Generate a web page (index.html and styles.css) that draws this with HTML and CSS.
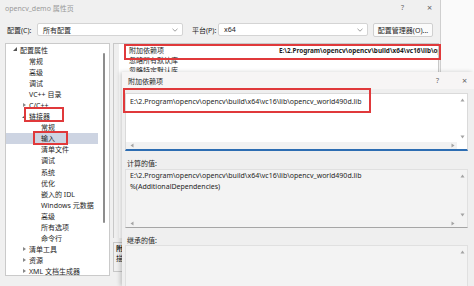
FILE: index.html
```html
<!DOCTYPE html>
<html lang="zh-CN">
<head>
  <meta charset="UTF-8" />
  <title>opencv_demo 属性页</title>
  <link rel="stylesheet" href="styles.css">
</head>
<body>

  <div class="window">
    <div class="titlebar">
      <span class="title">opencv_demo 属性页</span>
      <span class="help">?</span>
      <span class="close">×</span>
    </div>

    <div class="config-row">
      <span class="lbl lbl-config">配置(C):</span>
      <div class="combo combo-config">
        <span>所有配置</span>
        <svg width="6" height="4" viewBox="0 0 6 4"><path d="M0.5 0.8 L3 3.2 L5.5 0.8" fill="none" stroke="#888" stroke-width="0.8"/></svg>
      </div>
      <span class="lbl lbl-platform">平台(P):</span>
      <div class="combo combo-platform">
        <span>x64</span>
        <svg width="6" height="4" viewBox="0 0 6 4"><path d="M0.5 0.8 L3 3.2 L5.5 0.8" fill="none" stroke="#888" stroke-width="0.8"/></svg>
      </div>
      <button class="btn">配置管理器(O)...</button>
    </div>

    <div class="main">
      <div class="tree">
        <div class="thumb"></div>
        <div class="node lv0"><i class="tw open"></i>配置属性</div>
        <div class="node lv1"><i class="tw"></i>常规</div>
        <div class="node lv1"><i class="tw"></i>高级</div>
        <div class="node lv1"><i class="tw"></i>调试</div>
        <div class="node lv1"><i class="tw"></i>VC++ 目录</div>
        <div class="node lv1"><i class="tw shut"></i>C/C++</div>
        <div class="node lv1"><i class="tw open"></i>链接器</div>
        <div class="node lv2">常规</div>
        <div class="node lv2 sel">输入</div>
        <div class="node lv2">清单文件</div>
        <div class="node lv2">调试</div>
        <div class="node lv2">系统</div>
        <div class="node lv2">优化</div>
        <div class="node lv2">嵌入的 IDL</div>
        <div class="node lv2">Windows 元数据</div>
        <div class="node lv2">高级</div>
        <div class="node lv2">所有选项</div>
        <div class="node lv2">命令行</div>
        <div class="node lv1"><i class="tw shut"></i>清单工具</div>
        <div class="node lv1"><i class="tw shut"></i>资源</div>
        <div class="node lv1"><i class="tw shut"></i>XML 文档生成器</div>
      </div>

      <div class="props">
        <div class="grid">
          <div class="row">
            <span class="name">附加依赖项</span>
            <span class="value">E:\2.Program\opencv\opencv\build\x64\vc16\lib\opencv_world490d.lib;%(AdditionalDependencies)</span>
          </div>
          <div class="row"><span class="name">忽略所有默认库</span></div>
          <div class="row"><span class="name">忽略特定默认库</span></div>
        </div>
        <div class="desc">
          <b>附</b>
          <span>描</span>
        </div>
      </div>
    </div>
  </div>

  <div class="dep-dialog">
    <div class="dlg-title">
      <span class="title">附加依赖项</span>
      <span class="help">?</span>
      <span class="close">×</span>
    </div>

    <div class="box edit">
      <div class="box-text">E:\2.Program\opencv\opencv\build\x64\vc16\lib\opencv_world490d.lib</div>
      <div class="vscroll">
        <svg width="5" height="4" viewBox="0 0 5 4"><path d="M2.5 0.5 L4.5 3.5 L0.5 3.5 Z" fill="#a3a3a3"/></svg>
        <svg width="5" height="4" viewBox="0 0 5 4"><path d="M0.5 0.5 L4.5 0.5 L2.5 3.5 Z" fill="#a3a3a3"/></svg>
      </div>
      <div class="hscroll">
        <svg width="4" height="5" viewBox="0 0 4 5"><path d="M3.5 0.5 L3.5 4.5 L0.5 2.5 Z" fill="#a3a3a3"/></svg>
        <svg width="4" height="5" viewBox="0 0 4 5"><path d="M0.5 0.5 L3.5 2.5 L0.5 4.5 Z" fill="#a3a3a3"/></svg>
      </div>
    </div>

    <div class="field-label">计算的值:</div>
    <div class="box computed">
      <div class="box-text">E:\2.Program\opencv\opencv\build\x64\vc16\lib\opencv_world490d.lib<br>%(AdditionalDependencies)</div>
      <div class="vscroll">
        <svg width="5" height="4" viewBox="0 0 5 4"><path d="M2.5 0.5 L4.5 3.5 L0.5 3.5 Z" fill="#a3a3a3"/></svg>
        <svg width="5" height="4" viewBox="0 0 5 4"><path d="M0.5 0.5 L4.5 0.5 L2.5 3.5 Z" fill="#a3a3a3"/></svg>
      </div>
      <div class="hscroll">
        <svg width="4" height="5" viewBox="0 0 4 5"><path d="M3.5 0.5 L3.5 4.5 L0.5 2.5 Z" fill="#a3a3a3"/></svg>
        <svg width="4" height="5" viewBox="0 0 4 5"><path d="M0.5 0.5 L3.5 2.5 L0.5 4.5 Z" fill="#a3a3a3"/></svg>
      </div>
    </div>

    <div class="field-label">继承的值:</div>
    <div class="box inherited">
      <div class="box-text"></div>
      <div class="vscroll">
        <svg width="5" height="4" viewBox="0 0 5 4"><path d="M2.5 0.5 L4.5 3.5 L0.5 3.5 Z" fill="#a3a3a3"/></svg>
      </div>
    </div>
  </div>

  <!-- red highlight boxes drawn over the screenshot -->
  <div class="mark mark-row"></div>
  <div class="mark mark-linker"></div>
  <div class="mark mark-input"></div>
  <div class="mark mark-path"></div>

</body>
</html>
```

FILE: styles.css
```css
body {
  margin: 0;
  width: 474px;
  height: 286px;
  overflow: hidden;
  position: relative;
  background: #fafafa;
  font-family: "Noto Sans", "Noto Sans CJK SC", sans-serif;
  font-size: 7px;
  color: #1e1e1e;
}
.window {
  width: 441px;
  height: 286px;
  box-sizing: border-box;
  padding: 0 1px 0 5px;
  background: #f0f0f0;
  border-right: 1px solid #cfcfcf;
  display: flex;
  flex-direction: column;
}
.titlebar {
  height: 15px;
  display: flex;
  align-items: center;
  color: #9a9a9a;
}
.titlebar .title {
  flex: 1;
}
.help {
  width: 26px;
  color: #666;
}
.close {
  width: 12px;
  color: #666;
  font-size: 9px;
}
.config-row {
  height: 15px;
  margin-top: 7px;
  display: flex;
  align-items: center;
}
.lbl-config {
  width: 30px;
  padding-left: 2px;
}
.lbl-platform {
  width: 26px;
  margin-left: 9px;
}
.combo {
  height: 13px;
  box-sizing: border-box;
  background: #fff;
  border: 1px solid #d4d4d4;
  border-radius: 2px;
  display: flex;
  align-items: center;
  justify-content: space-between;
  padding: 0 4px 0 5px;
}
.combo-config {
  width: 146px;
}
.combo-platform {
  width: 150px;
}
.btn {
  margin-left: 5px;
  width: 60px;
  height: 14px;
  padding: 0;
  font: inherit;
  color: #1e1e1e;
  background: #fbfbfb;
  border: 1px solid #d0d0d0;
  border-radius: 2px;
}
.main {
  margin-top: 6px;
  height: 233px;
  display: flex;
  gap: 3px;
}
.tree {
  position: relative;
  width: 105px;
  flex: none;
  box-sizing: border-box;
  background: #fff;
  border: 1px solid #cacaca;
}
.thumb {
  position: absolute;
  left: 97px;
  top: 9px;
  width: 2px;
  height: 170px;
  border-radius: 1px;
  background: #8d8d8d;
}
.node {
  height: 11.1px;
  display: flex;
  align-items: center;
  margin-right: 11px;
  white-space: nowrap;
}
.node.lv0 { padding-left: 7px; }
.node.lv1 { padding-left: 16px; }
.node.lv2 { padding-left: 35px; }
.node.sel {
  background: #cdd4e2;
}
.tw {
  width: 7px;
  height: 7px;
  flex: none;
  position: relative;
}
.tw.open::before {
  content: "";
  position: absolute;
  left: 0;
  top: 1px;
  border-right: 4px solid #555;
  border-top: 4px solid transparent;
}
.tw.shut::before {
  content: "";
  position: absolute;
  left: 1px;
  top: 1px;
  border-left: 3px solid #888;
  border-top: 2.5px solid transparent;
  border-bottom: 2.5px solid transparent;
}
.props {
  flex: 1;
  min-width: 0;
  display: flex;
  flex-direction: column;
  gap: 4px;
  padding-bottom: 4px;
}
.grid {
  flex: 1;
  box-sizing: border-box;
  padding-top: 1px;
  background: linear-gradient(to right, #efefef 5px, #fff 5px);
  border: 1px solid #c8c8c8;
  border-bottom: 0;
  overflow: hidden;
}
.row {
  height: 10px;
  display: flex;
  align-items: center;
  white-space: nowrap;
  overflow: hidden;
}
.name {
  width: 150px;
  flex: none;
  padding-left: 15px;
}
.value {
  font-weight: bold;
  font-size: 6.4px;
}
.desc {
  height: 30px;
  box-sizing: border-box;
  border: 1px solid #c8c8c8;
  padding: 1px 0 0 2px;
  display: flex;
  flex-direction: column;
  line-height: 10px;
}
.dep-dialog {
  position: absolute;
  left: 122px;
  top: 72px;
  width: 352px;
  height: 214px;
  overflow: hidden;
  background: #efefef;
  box-shadow: -2px 0 4px rgba(0, 0, 0, 0.18);
  padding: 0 6px 0 3px;
  box-sizing: border-box;
}
.dlg-title {
  height: 17px;
  margin: 0 -6px 4px -3px;
  padding-left: 6px;
  display: flex;
  align-items: center;
  background: #f7f5f5;
}
.dlg-title .title {
  flex: 1;
}
.box {
  display: grid;
  grid-template-columns: 1fr 10px;
  grid-template-rows: 1fr 7px;
  box-sizing: border-box;
  width: 343px;
}
.box-text {
  padding: 3px 4px;
  white-space: nowrap;
  overflow: hidden;
}
.vscroll {
  display: flex;
  flex-direction: column;
  justify-content: space-between;
  align-items: center;
  padding: 4px 0 3px;
}
.hscroll {
  display: flex;
  justify-content: space-between;
  align-items: center;
  padding: 0 2px 0 4px;
  background: #f2f2f2;
}
.edit {
  height: 58px;
  background: #fff;
  border: 1px solid #dadada;
  border-bottom: 2px solid #2d6db2;
}
.field-label {
  height: 13px;
  margin-top: 5px;
  display: flex;
  align-items: center;
  padding-left: 2px;
}
.computed {
  height: 59px;
  background: #f3f3f3;
  border: 1px solid #e0e0e0;
  border-bottom: 1px solid #a5a5a5;
}
.computed .box-text {
  padding: 0 4px;
  line-height: 11px;
}
.inherited {
  height: 41px;
  margin-top: -1px;
  background: #f3f3f3;
  border: 1px solid #e0e0e0;
  border-bottom: 0;
  grid-template-rows: 1fr;
}
.inherited .vscroll {
  justify-content: flex-start;
}
.mark {
  position: absolute;
  box-sizing: border-box;
  border: 2px solid #e0393b;
}
.mark-row {
  left: 124px;
  top: 44px;
  width: 317px;
  height: 16px;
}
.mark-linker {
  left: 24px;
  top: 107px;
  width: 40px;
  height: 15px;
}
.mark-input {
  left: 33px;
  top: 131px;
  width: 35px;
  height: 14px;
}
.mark-path {
  left: 123px;
  top: 88px;
  width: 248px;
  height: 25px;
}
```
